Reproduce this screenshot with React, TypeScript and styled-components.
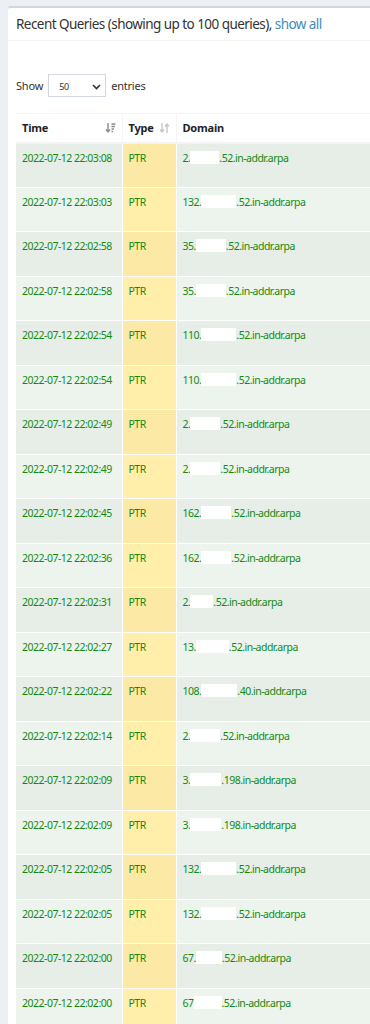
import React from 'react'
import styled, { createGlobalStyle } from 'styled-components'

const GlobalStyle = createGlobalStyle`
  html, body {
    margin: 0;
    padding: 0;
    background: #ecf0f5;
    overflow: hidden;
    font-family: "Noto Sans", "Open Sans", sans-serif;
  }
`

interface QueryRow {
  time: string
  head: string
  mask: number
  tail: string
}

const rows: QueryRow[] = [
  { time: '2022-07-12 22:03:08', head: '2.', mask: 29, tail: '.52.in-addr.arpa' },
  { time: '2022-07-12 22:03:03', head: '132.', mask: 35, tail: '.52.in-addr.arpa' },
  { time: '2022-07-12 22:02:58', head: '35.', mask: 30, tail: '.52.in-addr.arpa' },
  { time: '2022-07-12 22:02:58', head: '35.', mask: 30, tail: '.52.in-addr.arpa' },
  { time: '2022-07-12 22:02:54', head: '110.', mask: 35, tail: '.52.in-addr.arpa' },
  { time: '2022-07-12 22:02:54', head: '110.', mask: 35, tail: '.52.in-addr.arpa' },
  { time: '2022-07-12 22:02:49', head: '2.', mask: 30, tail: '.52.in-addr.arpa' },
  { time: '2022-07-12 22:02:49', head: '2.', mask: 30, tail: '.52.in-addr.arpa' },
  { time: '2022-07-12 22:02:45', head: '162.', mask: 30, tail: '.52.in-addr.arpa' },
  { time: '2022-07-12 22:02:36', head: '162.', mask: 30, tail: '.52.in-addr.arpa' },
  { time: '2022-07-12 22:02:31', head: '2.', mask: 23, tail: '.52.in-addr.arpa' },
  { time: '2022-07-12 22:02:27', head: '13.', mask: 33, tail: '.52.in-addr.arpa' },
  { time: '2022-07-12 22:02:22', head: '108.', mask: 36, tail: '.40.in-addr.arpa' },
  { time: '2022-07-12 22:02:14', head: '2.', mask: 30, tail: '.52.in-addr.arpa' },
  { time: '2022-07-12 22:02:09', head: '3.', mask: 31, tail: '.198.in-addr.arpa' },
  { time: '2022-07-12 22:02:09', head: '3.', mask: 31, tail: '.198.in-addr.arpa' },
  { time: '2022-07-12 22:02:05', head: '132.', mask: 35, tail: '.52.in-addr.arpa' },
  { time: '2022-07-12 22:02:05', head: '132.', mask: 35, tail: '.52.in-addr.arpa' },
  { time: '2022-07-12 22:02:00', head: '67.', mask: 26, tail: '.52.in-addr.arpa' },
  { time: '2022-07-12 22:02:00', head: '67', mask: 28, tail: '.52.in-addr.arpa' },
]

const Box = styled.div`
  margin: 6px 0 0 8px;
  width: 380px;
  background: #fff;
  border-top: 2px solid #d2d6de;
  border-radius: 3px 0 0 0;
`

const BoxHeader = styled.div`
  height: 32px;
  display: flex;
  align-items: center;
  padding: 0 8px;
  border-bottom: 1px solid #f4f4f4;
  font-size: 13.5px;
  color: #333;
  letter-spacing: -0.55px;

  a {
    color: #3c8dbc;
    text-decoration: none;
  }
`

const BoxBody = styled.div`
  padding: 33px 0 0 8px;
`

const LengthRow = styled.div`
  display: flex;
  align-items: center;
  gap: 5px;
  height: 23px;
  font-size: 11px;
  letter-spacing: -0.2px;
  color: #333;
`

const Select = styled.div`
  width: 58px;
  height: 23px;
  box-sizing: border-box;
  border: 1px solid #d2d6de;
  display: flex;
  align-items: center;
  justify-content: space-between;
  padding: 2px 4px 0 10px;
  font-size: 9px;
  color: #333;
`

const Table = styled.table`
  margin-top: 16px;
  border-collapse: collapse;
  width: 372px;
  table-layout: fixed;
`

const HeadCell = styled.th<{ $w?: number }>`
  width: ${({ $w }) => ($w ? `${$w}px` : 'auto')};
  height: 29px;
  box-sizing: border-box;
  padding: 0 6px;
  text-align: left;
  font-size: 11px;
  font-weight: 700;
  letter-spacing: -0.2px;
  color: #1c2529;
  border-top: 1px solid #f4f4f4;
  border-left: 1px solid #f4f4f4;
  border-bottom: 2px solid #f4f4f4;

  &:first-child {
    border-left: 0;
  }
`

const HeadInner = styled.div`
  display: flex;
  align-items: center;
  justify-content: space-between;
`

const Row = styled.tr<{ $odd: boolean }>`
  height: 44.5px;
  background: ${({ $odd }) => ($odd ? '#e6eee7' : '#ecf4ed')};
  border-bottom: 1px solid #fff;
`

const Cell = styled.td<{ $type?: boolean; $odd?: boolean }>`
  vertical-align: top;
  padding: 7px 6px 0;
  font-size: 10.5px;
  letter-spacing: -0.5px;
  color: #128a12;
  white-space: nowrap;
  border-left: 1px solid #fff;
  background: ${({ $type, $odd }) => ($type ? ($odd ? '#fce9a5' : '#ffefab') : 'transparent')};

  &:first-child {
    border-left: 0;
  }
`

const Mask = styled.span<{ $w: number }>`
  display: inline-block;
  width: ${({ $w }) => $w}px;
  height: 13px;
  background: #fff;
  vertical-align: -2px;
`

const SortIcon = ({ active }: { active?: boolean }) => {
  const c = active ? '#8a8a8a' : '#c8c8c8'
  return (
    <svg width="11" height="12" viewBox="0 0 11 12">
      <path d="M3 1v9M1 7.5l2 2.5 2-2.5" stroke={c} strokeWidth="1.4" fill="none" />
      {active ? (
        <path d="M6.5 2h4M6.5 4.5h3.5M6.5 7h2.5M6.5 9.5h1.5" stroke={c} strokeWidth="1.3" />
      ) : (
        <path d="M8 11V2M6 4.5l2-2.5 2 2.5" stroke={c} strokeWidth="1.4" fill="none" />
      )}
    </svg>
  )
}

const Chevron = () => (
  <svg width="9" height="6" viewBox="0 0 9 6">
    <path d="M1 1l3.5 3.5L8 1" stroke="#333" strokeWidth="1.6" fill="none" />
  </svg>
)

export default function App() {
  return (
    <>
      <GlobalStyle />
      <Box>
        <BoxHeader>
          <span>
            Recent Queries (showing up to 100 queries), <a href="#">show all</a>
          </span>
        </BoxHeader>
        <BoxBody>
          <LengthRow>
            <span>Show</span>
            <Select>
              <span>50</span>
              <Chevron />
            </Select>
            <span>entries</span>
          </LengthRow>
          <Table>
            <thead>
              <tr>
                <HeadCell $w={106}>
                  <HeadInner>
                    Time <SortIcon active />
                  </HeadInner>
                </HeadCell>
                <HeadCell $w={54}>
                  <HeadInner>
                    Type <SortIcon />
                  </HeadInner>
                </HeadCell>
                <HeadCell>
                  <HeadInner>
                    Domain <SortIcon />
                  </HeadInner>
                </HeadCell>
              </tr>
            </thead>
            <tbody>
              {rows.map((r, i) => (
                <Row key={i} $odd={i % 2 === 0}>
                  <Cell>{r.time}</Cell>
                  <Cell $type $odd={i % 2 === 0}>PTR</Cell>
                  <Cell>
                    {r.head}
                    <Mask $w={r.mask} />
                    {r.tail}
                  </Cell>
                </Row>
              ))}
            </tbody>
          </Table>
        </BoxBody>
      </Box>
    </>
  )
}
